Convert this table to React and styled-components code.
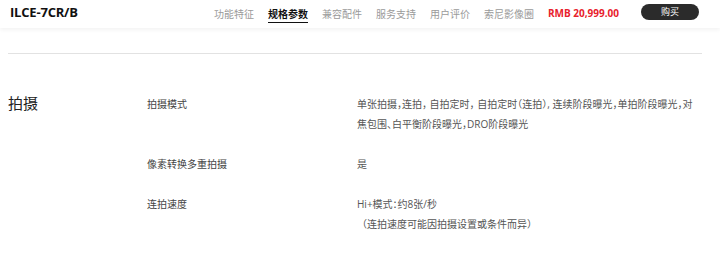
import styled, { createGlobalStyle } from 'styled-components';

const GlobalStyle = createGlobalStyle`
  body {
    margin: 0;
    background: #fff;
    font-family: "Open Sans", "Noto Sans CJK SC", sans-serif;
  }
`;

const navItems = ['功能特征', '规格参数', '兼容配件', '服务支持', '用户评价', '索尼影像圈'];

const specs = [
  {
    label: '拍摄模式',
    lines: ['单张拍摄，连拍， 自拍定时， 自拍定时（连拍）, 连续阶段曝光，单拍阶段曝光，对焦包围、白平衡阶段曝光，DRO阶段曝光'],
  },
  { label: '像素转换多重拍摄', lines: ['是'] },
  { label: '连拍速度', lines: ['Hi+模式：约8张/秒', '（连拍速度可能因拍摄设置或条件而异）'] },
];

const App = () => {
  return (
    <>
      <GlobalStyle />
      <Header>
        <Model>ILCE-7CR/B</Model>
        <Nav>
          {navItems.map((item) => (
            <NavItem key={item} $active={item === '规格参数'}>
              {item}
            </NavItem>
          ))}
        </Nav>
        <Price>RMB 20,999.00</Price>
        <BuyButton>购买</BuyButton>
      </Header>
      <Content>
        <Divider />
        <Section>
          <SectionTitle>拍摄</SectionTitle>
          <SpecList>
            {specs.map((spec) => (
              <SpecRow key={spec.label}>
                <SpecLabel>{spec.label}</SpecLabel>
                <SpecValue>
                  {spec.lines.map((line) => (
                    <p key={line}>{line}</p>
                  ))}
                </SpecValue>
              </SpecRow>
            ))}
          </SpecList>
        </Section>
      </Content>
    </>
  );
};

const Header = styled.header`
  height: 28px;
  display: flex;
  align-items: center;
  padding: 0 21px 0 10px;
  box-shadow: 0 2px 4px rgba(0, 0, 0, 0.05);
  position: relative;
`;

const Model = styled.div`
  font-size: 13px;
  font-weight: 700;
  color: #111;
  letter-spacing: -0.2px;
  margin-top: -4px;
`;

const Nav = styled.nav`
  margin-left: auto;
  display: flex;
  gap: 14px;
`;

const NavItem = styled.a`
  font-size: 10px;
  line-height: 14px;
  color: ${(p) => (p.$active ? '#111' : '#9a9a9a')};
  font-weight: ${(p) => (p.$active ? 700 : 400)};
  padding-bottom: 1px;
  border-bottom: 1px solid ${(p) => (p.$active ? '#111' : 'transparent')};
  margin-top: 1px;
`;

const Price = styled.div`
  margin-left: 14px;
  font-size: 10px;
  font-weight: 700;
  color: #e8212c;
  margin-top: -2px;
`;

const BuyButton = styled.button`
  margin-left: 22px;
  width: 58px;
  height: 16px;
  border: none;
  border-radius: 8px;
  background: #2b2b2b;
  color: #fff;
  font-family: inherit;
  font-size: 9px;
  line-height: 16px;
  padding: 0;
  margin-top: -4px;
`;

const Content = styled.main`
  padding: 25px 18px 0 8px;
`;

const Divider = styled.hr`
  margin: 0;
  border: none;
  border-top: 1px solid #e2e2e2;
`;

const Section = styled.section`
  display: grid;
  grid-template-columns: 139px 1fr;
  padding-top: 40px;
`;

const SectionTitle = styled.h2`
  margin: 0;
  font-size: 15px;
  font-weight: 400;
  line-height: 20px;
  color: #222;
  margin-top: -1px;
`;

const SpecList = styled.div`
  display: flex;
  flex-direction: column;
  gap: 20px;
`;

const SpecRow = styled.div`
  display: grid;
  grid-template-columns: 210px 1fr;
`;

const SpecLabel = styled.div`
  font-size: 10px;
  line-height: 20px;
  color: #444;
`;

const SpecValue = styled.div`
  font-size: 10px;
  line-height: 20px;
  color: #555;
  font-feature-settings: "halt";

  p {
    margin: 0;
  }

  p + p {
    padding-left: 5px;
  }
`;

export default App;
